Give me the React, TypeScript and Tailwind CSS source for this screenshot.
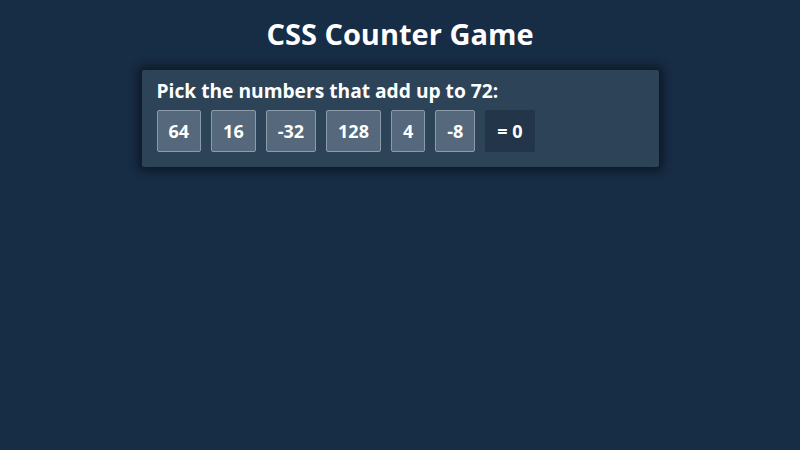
import { useState } from "react";

const numbers = [64, 16, -32, 128, 4, -8];

export default function App() {
  const [picked, setPicked] = useState<number[]>([]);

  const toggle = (i: number) => {
    setPicked((p) => (p.includes(i) ? p.filter((x) => x !== i) : [...p, i]));
  };

  const total = picked.reduce((sum, i) => sum + numbers[i], 0);

  return (
    <div className="min-h-screen w-full bg-[#172c45] text-white font-['Open_Sans',sans-serif] flex flex-col items-center">
      <h1 className="mt-[14px] text-[29px] font-bold leading-[40px]">CSS Counter Game</h1>

      <div className="mt-[16px] w-[517px] bg-[#2d4358] rounded-[2px] px-[15px] pt-[8px] pb-[15px] shadow-[0_0_10px_4px_rgba(0,0,0,0.45)]">
        <p className="text-[19.2px] font-bold leading-[25px]">Pick the numbers that add up to 72:</p>

        <div className="mt-[7px] flex items-center gap-[10px]">
          {numbers.map((n, i) => (
            <button
              key={i}
              onClick={() => toggle(i)}
              className={`h-[42px] px-[11px] border rounded-[2px] text-[18px] font-bold leading-none ${
                picked.includes(i)
                  ? "bg-[#7d8fa1] border-[#b5c2cf]"
                  : "bg-[#56687b] border-[#8c9bab]"
              }`}
            >
              {n}
            </button>
          ))}
          <div className="h-[42px] px-[12px] flex items-center bg-[#233649] rounded-[2px] text-[18px] font-bold">
            = {total}
          </div>
        </div>
      </div>
    </div>
  );
}
